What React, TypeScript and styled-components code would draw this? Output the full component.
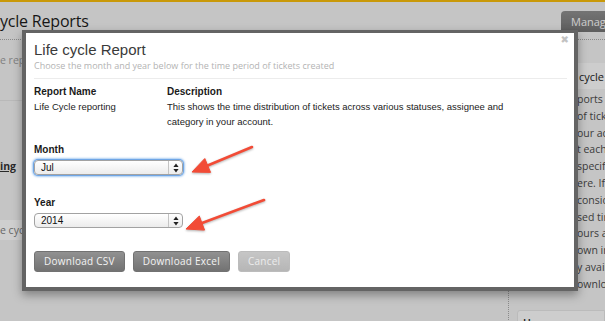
import React from 'react';
import styled, { createGlobalStyle } from 'styled-components';

const GlobalStyle = createGlobalStyle`
  html, body {
    margin: 0;
    padding: 0;
    background: #f1f1f1;
    overflow: hidden;
  }
  body {
    font-family: 'Open Sans', 'Liberation Sans', sans-serif;
  }
  * { box-sizing: border-box; }
`;

const Page = styled.div`
  position: relative;
  width: 605px;
  height: 321px;
  overflow: hidden;
  background: #f1f1f1;
`;

const TopBar = styled.div`
  height: 2px;
  background: #f6bb0b;
`;

const Header = styled.div`
  display: flex;
  justify-content: space-between;
  align-items: flex-start;
  height: 38px;
  border-bottom: 1px dotted #a9a9a9;
`;

const PageTitle = styled.h1`
  margin: 9px 0 0;
  font-size: 16px;
  line-height: 20px;
  font-weight: 400;
  letter-spacing: -0.2px;
  color: #1c1c1c;
`;

const ManageButton = styled.button`
  margin-top: 9px;
  width: 44px;
  height: 21px;
  padding: 0 0 0 10px;
  text-align: left;
  white-space: nowrap;
  overflow: hidden;
  border: none;
  border-radius: 4px 0 0 0;
  background: linear-gradient(#8e8e8e, #737373);
  color: #fafafa;
  font-family: 'Open Sans', sans-serif;
  font-size: 11px;
`;

const Columns = styled.div`
  display: flex;
  height: 282px;
`;

const Main = styled.div`
  flex: 0 0 509px;
  padding-top: 12px;
  border-right: 1px dotted #a9a9a9;
  font-size: 10.5px;
`;

const Intro = styled.p`
  margin: 0;
  line-height: 16px;
  color: #9c9c9c;
  padding-bottom: 32px;
  border-bottom: 1px solid #e2e2e2;
`;

const ReportLink = styled.a`
  display: block;
  margin-top: 57px;
  line-height: 16px;
  font-weight: 700;
  color: #333;
  text-decoration: underline;
`;

const ReportChip = styled.div`
  margin-top: 46px;
  width: 140px;
  height: 20px;
  line-height: 20px;
  background: #fdfdfd;
  color: #7d7d7d;
  border-radius: 0 3px 3px 0;
`;

const Sidebar = styled.div`
  flex: 1 1 auto;
  min-width: 0;
  margin-left: 8px;
  padding-top: 23px;
  font-size: 10.5px;
  color: #4a4a4a;
  white-space: nowrap;
  overflow: hidden;
`;

const SideHeading = styled.div`
  height: 26px;
  padding: 7px 0 0 62px;
  background: #fafafa;
  color: #1e1e1e;
  font-size: 11px;
  line-height: 14px;
`;

const SideText = styled.div`
  margin-top: 2px;
  padding-left: 60px;
  line-height: 16.8px;

  & + & {
    margin-top: 0;
  }
`;

const SideBox = styled.div`
  margin-top: 17px;
  height: 30px;
  padding: 5px 0 0 5px;
  background: #fbfbfb;
  border: 1px solid #e4e4e4;
  border-radius: 3px 0 0 0;
  color: #222;
  font-weight: 600;
`;

const Dimmer = styled.div`
  position: absolute;
  inset: 0;
  background: rgba(0, 0, 0, 0.18);
`;

const Modal = styled.div`
  position: absolute;
  left: 22px;
  top: 30px;
  width: 556px;
  height: 261px;
  border: 4px solid #646464;
  border-top-width: 3px;
  background: #fff;
  box-shadow: 0 4px 9px rgba(0, 0, 0, 0.35);
  font-family: 'Liberation Sans', Arial, sans-serif;
  color: #1d1d1d;
`;

const Close = styled.span`
  position: absolute;
  right: 5px;
  top: 1px;
  font-family: 'DejaVu Sans', sans-serif;
  font-size: 10px;
  line-height: 12px;
  color: #c2c2c2;
`;

const ModalHeader = styled.div`
  margin: 0 7px 0 8px;
  padding: 8px 0 6px;
  border-bottom: 1px solid #ececec;
`;

const ModalTitle = styled.h2`
  margin: 0;
  font-size: 15px;
  line-height: 18px;
  font-weight: 400;
  color: #3a3a3a;
`;

const ModalSub = styled.p`
  margin: 1px 0 0;
  font-family: 'Open Sans', sans-serif;
  font-size: 9px;
  line-height: 12px;
  color: #b3b3b3;
`;

const ModalBody = styled.div`
  padding: 5px 8px 0;
`;

const Details = styled.div`
  display: grid;
  grid-template-columns: 133px 360px;
  line-height: 15px;
`;

const Label = styled.div`
  font-size: 10px;
  font-weight: 700;
  color: #1a1a1a;
`;

const Value = styled.div`
  font-size: 9.5px;
  color: #222;
`;

const Field = styled.div<{ $gap: number }>`
  margin-top: ${p => p.$gap}px;
`;

const SelectWrap = styled.div<{ $focused?: boolean }>`
  position: relative;
  margin-top: 5px;
  width: 149px;
  height: 15px;
  border-radius: 4px;
  box-shadow: ${p => (p.$focused ? '0 0 0 1px #6fa6e6, 0 0 2px 2px #a9ccf2' : 'none')};
`;

const Select = styled.select`
  appearance: none;
  -webkit-appearance: none;
  display: block;
  width: 100%;
  height: 100%;
  margin: 0;
  padding: 0 0 0 6px;
  border: 1px solid #a2a2a2;
  border-radius: 4px;
  background: linear-gradient(#ffffff, #ececec);
  font-family: 'Liberation Sans', Arial, sans-serif;
  font-size: 10px;
  line-height: 13px;
  color: #111;
  outline: none;
`;

const Stepper = styled.span`
  position: absolute;
  right: 1px;
  top: 1px;
  bottom: 1px;
  width: 14px;
  display: flex;
  align-items: center;
  justify-content: center;
  border-left: 1px solid #c4c4c4;
  pointer-events: none;
`;

const Buttons = styled.div`
  display: flex;
  gap: 8px;
  margin-top: 23px;
`;

const Button = styled.button<{ $disabled?: boolean }>`
  height: 21px;
  padding: 0 9px;
  border: 1px solid ${p => (p.$disabled ? '#bcbcbc' : '#727272')};
  border-radius: 3px;
  background: ${p =>
    p.$disabled ? 'linear-gradient(#c6c6c6, #b6b6b6)' : 'linear-gradient(#919191, #727272)'};
  color: ${p => (p.$disabled ? '#ececec' : '#f3f3f3')};
  font-family: 'Open Sans', sans-serif;
  font-size: 10px;
  letter-spacing: 0.25px;
  line-height: 19px;
`;

const Arrows = styled.svg`
  position: absolute;
  left: 0;
  top: 0;
  pointer-events: none;
  filter: drop-shadow(0 1px 1px rgba(0, 0, 0, 0.3));
`;

function StepIcon() {
  return (
    <svg width="6" height="10" viewBox="0 0 6 10">
      <path d="M3 0.5 L5.6 4 H0.4 Z M3 9.5 L5.6 6 H0.4 Z" fill="#222" />
    </svg>
  );
}

function Arrow({ x1, y1, x2, y2 }: { x1: number; y1: number; x2: number; y2: number }) {
  const len = Math.hypot(x2 - x1, y2 - y1);
  const ux = (x2 - x1) / len;
  const uy = (y2 - y1) / len;
  const head = 17;
  const half = 7.5;
  const bx = x2 - ux * head;
  const by = y2 - uy * head;
  const pts = [
    [x2, y2],
    [bx - uy * half, by + ux * half],
    [bx + uy * half, by - ux * half],
  ]
    .map(p => p.join(','))
    .join(' ');
  return (
    <g fill="#f24b36" stroke="#f24b36">
      <line x1={x1} y1={y1} x2={bx + ux * 2} y2={by + uy * 2} strokeWidth={2.6} strokeLinecap="round" />
      <polygon points={pts} strokeWidth={1} strokeLinejoin="round" />
    </g>
  );
}

const SIDE_LINES = [
  'ports show',
  'of tickets',
  'our account',
  't each stage',
  'specific',
  'ere. If a',
  'considered',
  'sed time',
  'ours are',
  'own in the',
  'y available',
  'ownload',
];

export default function App() {
  return (
    <>
      <GlobalStyle />
      <Page>
        <TopBar />
        <Header>
          <PageTitle>ycle Reports</PageTitle>
          <ManageButton>Manage</ManageButton>
        </Header>
        <Columns>
          <Main>
            <Intro>e reports</Intro>
            <ReportLink>ing</ReportLink>
            <ReportChip>e cycle</ReportChip>
          </Main>
          <Sidebar>
            <SideHeading>cycle</SideHeading>
            {SIDE_LINES.map(line => (
              <SideText key={line}>{line}</SideText>
            ))}
            <SideBox>Hours</SideBox>
          </Sidebar>
        </Columns>

        <Dimmer />

        <Modal>
          <Close>✖</Close>
          <ModalHeader>
            <ModalTitle>Life cycle Report</ModalTitle>
            <ModalSub>Choose the month and year below for the time period of tickets created</ModalSub>
          </ModalHeader>
          <ModalBody>
            <Details>
              <Label>Report Name</Label>
              <Label>Description</Label>
              <Value>Life Cycle reporting</Value>
              <Value>
                This shows the time distribution of tickets across various statuses, assignee and category in
                your account.
              </Value>
            </Details>

            <Field $gap={15}>
              <Label>Month</Label>
              <SelectWrap $focused>
                <Select defaultValue="Jul">
                  {['Jan', 'Feb', 'Mar', 'Apr', 'May', 'Jun', 'Jul', 'Aug', 'Sep', 'Oct', 'Nov', 'Dec'].map(m => (
                    <option key={m}>{m}</option>
                  ))}
                </Select>
                <Stepper>
                  <StepIcon />
                </Stepper>
              </SelectWrap>
            </Field>

            <Field $gap={22}>
              <Label>Year</Label>
              <SelectWrap>
                <Select defaultValue="2014">
                  {['2012', '2013', '2014'].map(y => (
                    <option key={y}>{y}</option>
                  ))}
                </Select>
                <Stepper>
                  <StepIcon />
                </Stepper>
              </SelectWrap>
            </Field>

            <Buttons>
              <Button>Download CSV</Button>
              <Button>Download Excel</Button>
              <Button $disabled>Cancel</Button>
            </Buttons>
          </ModalBody>
        </Modal>

        <Arrows width="605" height="321" viewBox="0 0 605 321">
          <Arrow x1={252} y1={147} x2={192} y2={172} />
          <Arrow x1={264} y1={200} x2={186} y2={229} />
        </Arrows>
      </Page>
    </>
  );
}
